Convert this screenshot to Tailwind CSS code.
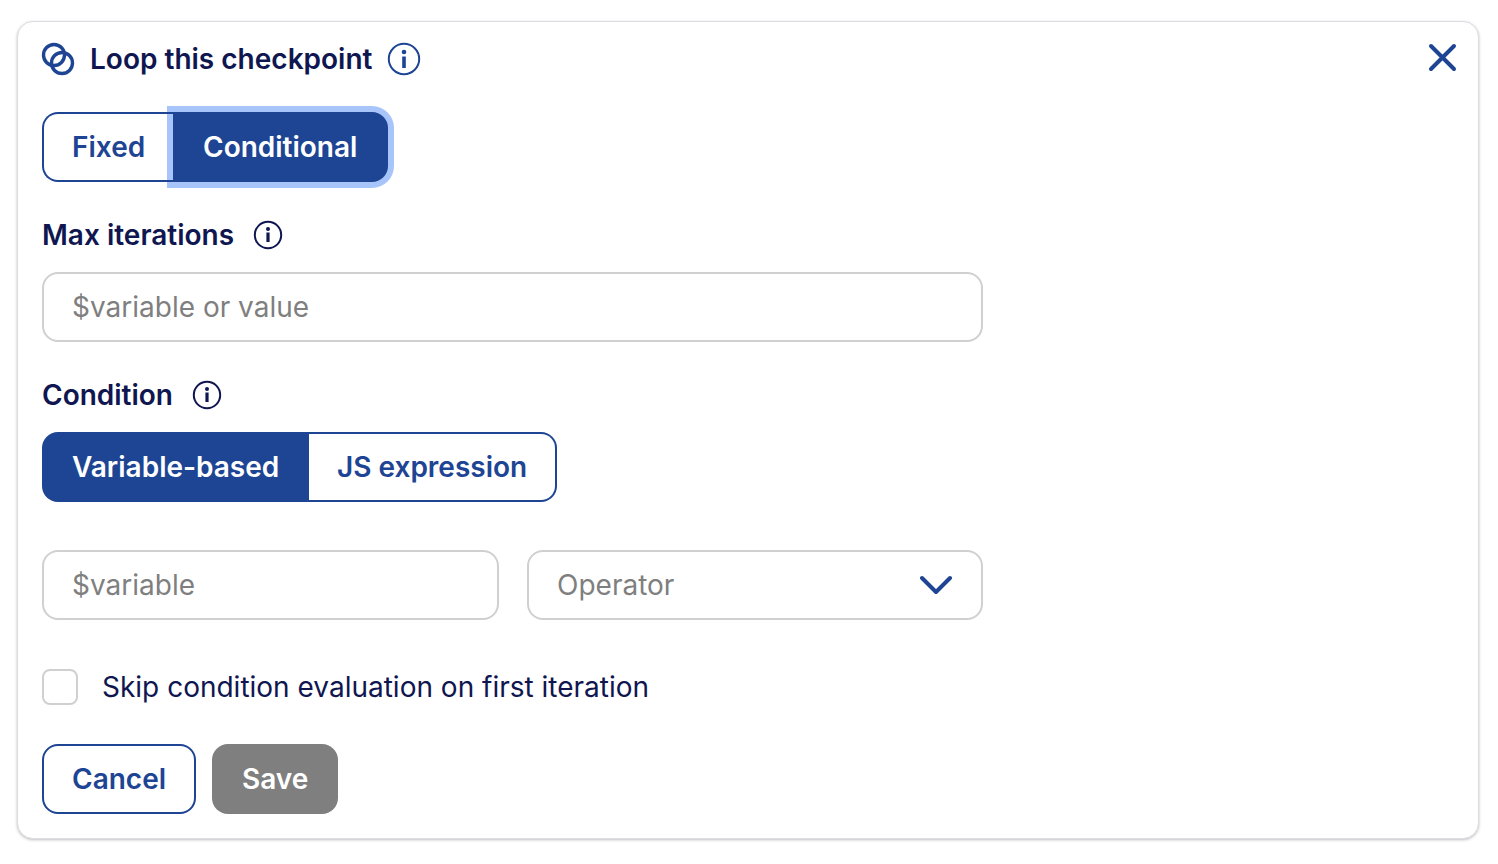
<!DOCTYPE html>
<html><head><meta charset="utf-8"><script src="https://cdn.jsdelivr.net/npm/@tailwindcss/browser@4"></script></head>
<body class="bg-white font-['Inter',sans-serif] text-[#0f1650]">
<div class="pt-[20.5px] pl-[16.5px] h-[864px] w-[1498px]">
<div class="relative w-[1462.5px] h-[818px] bg-white rounded-[16px] border-[1.5px] border-[#dcdce3] shadow-[0_1px_3px_rgba(0,0,0,0.25)] pl-[24px] pt-[20px]">
  <div class="flex items-center h-[34px]">
    <svg width="34" height="34" viewBox="0 0 34 34" fill="none" stroke="#1e4494" stroke-width="3.4" class="ml-[-1px]"><circle cx="13" cy="13" r="10.5"/><circle cx="21" cy="21" r="10.5"/></svg>
    <span class="ml-[15.5px] text-[28px] leading-[34px] font-semibold">Loop this checkpoint</span>
    <svg width="34" height="34" viewBox="0 0 34 34" fill="none" class="ml-[14.5px]"><circle cx="17" cy="17" r="15.2" stroke="#1e4494" stroke-width="2"/><circle cx="17" cy="10" r="2.3" fill="#1e4494"/><path d="M17 14.5v11.5" stroke="#1e4494" stroke-width="3.6"/></svg>
  </div>
  <button class="absolute right-[20px] top-[21px]" aria-label="Close"><svg width="30" height="30" viewBox="0 0 30 30" fill="none" stroke="#1e4494" stroke-width="4" stroke-linecap="round"><path d="M3 3 L26 26 M26 3 L3 26"/></svg></button>
  <div class="flex mt-[36px] h-[70px] w-fit">
    <div class="relative z-10 h-[70px] w-[131px] border-2 border-r-0 border-[#1e4494] rounded-l-[16px] flex items-center pl-[28.5px] text-[28px] font-semibold text-[#1e4494]">Fixed</div>
    <div class="h-[70px] w-[215px] bg-[#1e4494] rounded-r-[16px] flex items-center pl-[30.5px] text-[28px] font-semibold text-white shadow-[0_0_0_6px_#a8c5fb]">Conditional</div>
  </div>
  <div class="flex items-center mt-[36px] h-[34px]">
    <span class="ml-[0.5px] text-[28px] leading-[34px] font-semibold">Max iterations</span>
    <svg width="30" height="30" viewBox="0 0 30 30" fill="none" class="ml-[18.5px]"><circle cx="15" cy="15" r="13.2" stroke="#0f1650" stroke-width="2"/><circle cx="15" cy="9" r="2" fill="#0f1650"/><path d="M15 12.5v9.5" stroke="#0f1650" stroke-width="3.2"/></svg>
  </div>
  <div class="mt-[20px] w-[941px] h-[70px] border-2 border-[#d0d0d0] rounded-[16px] flex items-center pl-[28.5px] text-[28px] text-[#7f7f7f]">$variable or value</div>
  <div class="flex items-center mt-[36px] h-[34px]">
    <span class="ml-[0.5px] text-[28px] leading-[34px] font-semibold">Condition</span>
    <svg width="30" height="30" viewBox="0 0 30 30" fill="none" class="ml-[18.5px]"><circle cx="15" cy="15" r="13.2" stroke="#0f1650" stroke-width="2"/><circle cx="15" cy="9" r="2" fill="#0f1650"/><path d="M15 12.5v9.5" stroke="#0f1650" stroke-width="3.2"/></svg>
  </div>
  <div class="flex mt-[20px] h-[70px] w-fit">
    <div class="h-[70px] w-[267px] bg-[#1e4494] rounded-l-[16px] flex items-center pl-[30.5px] text-[28px] font-semibold text-white">Variable-based</div>
    <div class="h-[70px] w-[248px] border-2 border-l-0 border-[#1e4494] rounded-r-[16px] flex items-center pl-[28.5px] text-[28px] font-semibold text-[#1e4494]">JS expression</div>
  </div>
  <div class="flex gap-[28px] mt-[48px] w-[941px]">
    <div class="w-[457px] h-[70px] border-2 border-[#d0d0d0] rounded-[16px] flex items-center pl-[28.5px] text-[28px] text-[#7f7f7f]">$variable</div>
    <div class="w-[456px] h-[70px] border-2 border-[#d0d0d0] rounded-[16px] flex items-center justify-between pl-[28.5px] pr-[29px] text-[28px] text-[#7f7f7f]">Operator
      <svg width="32" height="20" viewBox="0 0 32 20" fill="none" stroke="#1e4494" stroke-width="4" stroke-linecap="round" stroke-linejoin="round" class="mt-[1px]"><path d="M2 3 L16 17 L30 3"/></svg>
    </div>
  </div>
  <div class="flex items-center mt-[49px] h-[36px]">
    <div class="w-[36px] h-[36px] border-2 border-[#d0d0d0] rounded-[8px]"></div>
    <span class="ml-[24.5px] text-[28px]">Skip condition evaluation on first iteration</span>
  </div>
  <div class="flex gap-[16px] mt-[39px]">
    <div class="h-[70px] w-[154px] border-2 border-[#1e4494] rounded-[16px] flex items-center pl-[28.5px] text-[28px] font-semibold text-[#1e4494]">Cancel</div>
    <div class="h-[70px] w-[126px] bg-[#7f7f7f] rounded-[16px] flex items-center pl-[30.5px] text-[28px] font-semibold text-white">Save</div>
  </div>
</div>
</div>
</body></html>
